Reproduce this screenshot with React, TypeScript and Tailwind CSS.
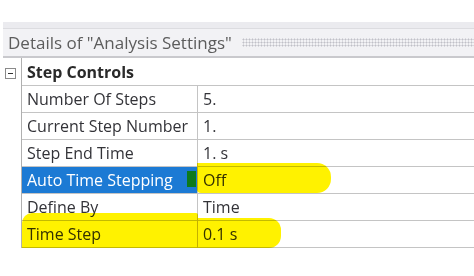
import React from "react";

const font = { fontFamily: '"Open Sans", "Noto Sans", sans-serif' };

function Row({
  label,
  value,
  labelClass = "",
  extra,
}: {
  label: string;
  value: string;
  labelClass?: string;
  extra?: React.ReactNode;
}) {
  return (
    <div className="flex h-[27px] border-b border-[#c4c4c4]">
      <div
        className={`relative flex w-[176px] shrink-0 items-center border-r border-[#c4c4c4] pl-[5px] ${labelClass}`}
      >
        {label}
        {extra}
      </div>
      <div className="flex flex-1 items-center pl-[5px]">{value}</div>
    </div>
  );
}

export default function App() {
  return (
    <div
      className="relative h-[276px] w-[474px] overflow-hidden bg-white text-[16px] font-medium text-[#333338]"
      style={font}
    >
      <div className="pt-[22px] pl-[3px]">
        <div className="h-[7px] bg-[#ebebef] border-b border-[#dcdce0]" />
        <div className="flex h-[29px] items-center border-b-2 border-[#c9c9cd] bg-[#f2f2f5]">
          <span className="pl-[5px] text-[17px] font-normal text-[#5c5c5c] leading-none">
            Details of "Analysis Settings"
          </span>
          <div className="ml-[10px] h-[9px] flex-1 bg-[radial-gradient(#c0c0c8_0.8px,transparent_1.2px)] bg-[length:3px_3px]" />
        </div>
      </div>
      <div className="flex">
        <div className="w-[21px] shrink-0 pt-[10px] pl-[5px]">
          <div className="flex h-[11px] w-[11px] items-center justify-center border border-[#8a8a8a] bg-white">
            <div className="h-[1px] w-[5px] bg-[#333]" />
          </div>
        </div>
        <div className="flex-1 border-l border-[#b0b0b0]">
          <div className="flex h-[28px] items-center border-b border-[#c4c4c4] pl-[5px] font-bold text-[#2a2a2a]">
            Step Controls
          </div>
          <Row label="Number Of Steps" value="5." />
          <Row label="Current Step Number" value="1." />
          <Row label="Step End Time" value="1. s" />
          <Row
            label="Auto Time Stepping"
            value="Off"
            labelClass="bg-[#1c7ad4] text-white"
            extra={
              <div className="absolute right-[1px] top-[4px] h-[16px] w-[9px] bg-[#0d7a1c]" />
            }
          />
          <Row label="Define By" value="Time" />
          <Row label="Time Step" value="0.1 s" />
        </div>
      </div>
      {/* highlighter marks */}
      <div className="pointer-events-none absolute left-[197px] top-[163px] h-[30px] w-[134px] rounded-r-[14px] rounded-bl-[4px] bg-[#fff200] mix-blend-multiply" />
      <div className="pointer-events-none absolute left-[22px] top-[213px] h-[35px] w-[176px] rounded-tl-[10px] rounded-tr-[2px] bg-[#fff200] mix-blend-multiply" />
      <div className="pointer-events-none absolute left-[197px] top-[218px] h-[30px] w-[84px] rounded-r-[12px] bg-[#fff200] mix-blend-multiply" />
    </div>
  );
}
